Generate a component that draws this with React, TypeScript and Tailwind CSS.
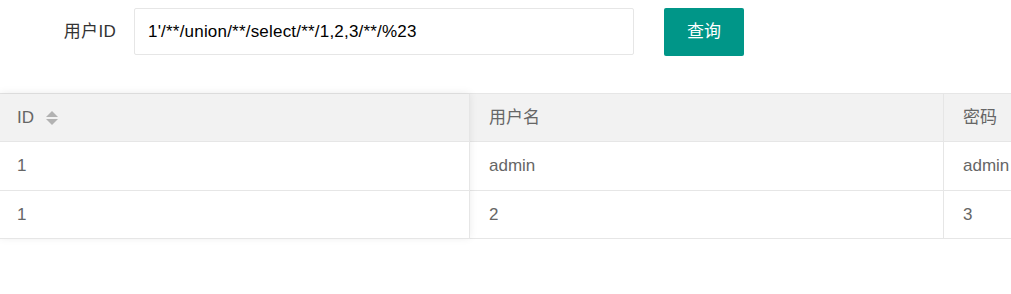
import { useState } from 'react';

const rows = [
  { id: '1', username: 'admin', password: 'admin' },
  { id: '1', username: '2', password: '3' },
];

function SortIcon() {
  return (
    <span className="ml-[12px] inline-flex flex-col gap-[2px]">
      <span className="block h-0 w-0 border-x-[6px] border-b-[6px] border-x-transparent border-b-[#b2b2b2]" />
      <span className="block h-0 w-0 border-x-[6px] border-t-[6px] border-x-transparent border-t-[#b2b2b2]" />
    </span>
  );
}

export default function App() {
  const [value, setValue] = useState("1'/**/union/**/select/**/1,2,3/**/%23");

  return (
    <div
      className="h-[294px] w-[1011px] overflow-hidden bg-white text-[17px] text-[#666]"
      style={{ fontFamily: '"Liberation Sans", Arial, "Noto Sans CJK SC", sans-serif' }}
    >
      {/* Search form */}
      <div className="flex h-[93px] items-start pt-2">
        <label className="w-[116px] pt-[11px] text-right tracking-[0.3px] text-[#333]">用户ID</label>
        <input
          value={value}
          onChange={(e) => setValue(e.target.value)}
          className="ml-[18px] h-[47px] w-[500px] rounded-[2px] border border-[#e6e6e6] px-[13px] tracking-[0.2px] text-black outline-none"
        />
        <button className="ml-[30px] h-[48px] w-[80px] rounded-[2px] bg-[#009688] text-white">
          查询
        </button>
      </div>

      {/* Table */}
      <div className="flex w-[1200px] border-t border-[#e6e6e6]">
        {/* fixed left column */}
        <div className="relative z-10 w-[470px] shrink-0 border-r border-[#e6e6e6] shadow-[0_-1px_8px_rgba(0,0,0,0.08)]">
          <div className="flex h-[48px] items-center border-b border-[#e6e6e6] bg-[#f2f2f2] pl-[17px]">
            ID
            <SortIcon />
          </div>
          {rows.map((r, i) => (
            <div key={i} className="flex h-[48.5px] items-center border-b border-[#e6e6e6] bg-white pl-[17px]">
              {r.id}
            </div>
          ))}
        </div>

        <div className="flex-1">
          <div className="grid h-[48px] grid-cols-[474px_1fr] border-b border-[#e6e6e6] bg-[#f2f2f2]">
            <div className="flex items-center border-r border-[#e6e6e6] pl-[19px]">用户名</div>
            <div className="flex items-center pl-[19px]">密码</div>
          </div>
          {rows.map((r, i) => (
            <div key={i} className="grid h-[48.5px] grid-cols-[474px_1fr] border-b border-[#e6e6e6]">
              <div className="flex items-center border-r border-[#e6e6e6] pl-[19px]">{r.username}</div>
              <div className="flex items-center pl-[19px]">{r.password}</div>
            </div>
          ))}
        </div>
      </div>
    </div>
  );
}
